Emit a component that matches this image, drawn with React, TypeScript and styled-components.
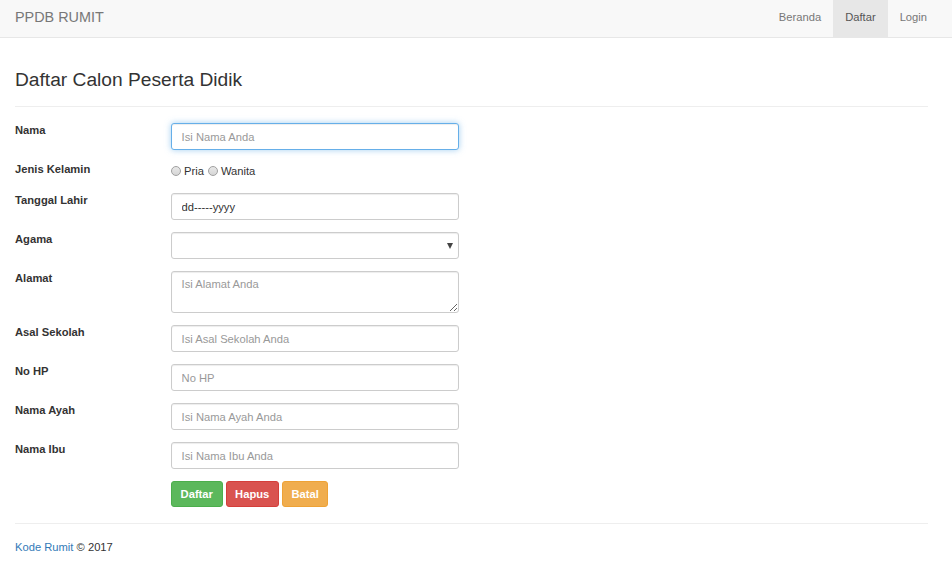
import React from "react";
import styled, { createGlobalStyle, css } from "styled-components";

const Global = createGlobalStyle`
  html, body { margin: 0; padding: 0; background: #fff; }
  body {
    font-family: "Liberation Sans", Arial, Helvetica, sans-serif;
    font-size: 11.2px;
    line-height: 16px;
    color: #333;
  }
  * { box-sizing: border-box; }
`;

const Navbar = styled.nav`
  height: 38px;
  background: #f8f8f8;
  border-bottom: 1px solid #e7e7e7;
  display: flex;
  align-items: stretch;
  justify-content: space-between;
  padding: 0 13px 0 15px;
`;

const Brand = styled.a`
  font-size: 14.4px;
  line-height: 35px;
  color: #777;
  text-decoration: none;
`;

const NavList = styled.ul`
  list-style: none;
  margin: 0;
  padding: 0;
  display: flex;
  height: 37px;
`;

const NavItem = styled.li<{ $active?: boolean }>`
  padding: 0 12px;
  line-height: 35px;
  color: #777;
  ${(p) =>
    p.$active &&
    css`
      background: #e7e7e7;
      color: #555;
    `}
`;

const Container = styled.main`
  padding: 0 24px 0 15px;
`;

const PageHeader = styled.div`
  margin-top: 31px;
  padding-bottom: 16px;
  border-bottom: 1px solid #eee;
`;

const Title = styled.h3`
  margin: 0;
  font-size: 19.2px;
  line-height: 21px;
  font-weight: 500;
  color: #333;
`;

const Form = styled.form`
  margin-top: 16px;
  display: grid;
  grid-template-columns: 156px 288px;
  row-gap: 12px;
  align-items: start;
`;

const Label = styled.label`
  font-weight: bold;
  line-height: 14px;
`;

const fieldBase = css`
  display: block;
  width: 288px;
  height: 27px;
  padding: 0 9.6px;
  font-family: "Liberation Sans", Arial, Helvetica, sans-serif;
  font-size: 11.2px;
  color: #555;
  background: #fff;
  border: 1px solid #ccc;
  border-radius: 3px;
  box-shadow: inset 0 1px 1px rgba(0, 0, 0, 0.075);
  outline: none;
  &::placeholder {
    color: #999;
  }
`;

const Input = styled.input<{ $focus?: boolean; $filled?: boolean }>`
  ${fieldBase}
  ${(p) =>
    p.$filled &&
    css`
      color: #333;
    `}
  ${(p) =>
    p.$focus &&
    css`
      border-color: #66afe9;
      box-shadow: inset 0 1px 1px rgba(0, 0, 0, 0.075),
        0 0 6px rgba(102, 175, 233, 0.6);
    `}
`;

const TextArea = styled.textarea`
  ${fieldBase}
  height: 42px;
  padding-top: 4px;
  line-height: 16px;
  resize: vertical;
`;

const SelectWrap = styled.div`
  position: relative;
  width: 288px;
  &::after {
    content: "";
    position: absolute;
    right: 6px;
    top: 11px;
    border-left: 3.5px solid transparent;
    border-right: 3.5px solid transparent;
    border-top: 6px solid #444;
    pointer-events: none;
  }
`;

const Select = styled.select`
  ${fieldBase}
  appearance: none;
  -webkit-appearance: none;
`;

const RadioGroup = styled.div`
  display: flex;
  align-items: center;
  height: 19px;
  padding-bottom: 1px;
`;

const RadioOption = styled.label`
  display: inline-flex;
  align-items: center;
  margin-right: 4px;
  color: #333;
`;

const RadioDot = styled.span`
  display: inline-block;
  width: 10px;
  height: 10px;
  border-radius: 50%;
  border: 1px solid #a0a0a0;
  background: linear-gradient(#e8e8e8, #d6d6d6);
  margin-right: 3px;
`;

const Buttons = styled.div`
  display: flex;
  gap: 3px;
`;

const variants = {
  success: { bg: "#5cb85c", border: "#4cae4c" },
  danger: { bg: "#d9534f", border: "#d43f3a" },
  warning: { bg: "#f0ad4e", border: "#eea236" },
};

const Button = styled.button<{ $variant: keyof typeof variants }>`
  height: 26px;
  padding: 0 8.6px;
  font-family: "Liberation Sans", Arial, Helvetica, sans-serif;
  font-size: 11.2px;
  font-weight: bold;
  color: #fff;
  border-radius: 3px;
  border: 1px solid ${(p) => variants[p.$variant].border};
  background: ${(p) => variants[p.$variant].bg};
  cursor: pointer;
`;

const Footer = styled.footer`
  margin-top: 16px;
  border-top: 1px solid #eee;
  padding-top: 15px;
`;

const FooterLink = styled.a`
  color: #337ab7;
  text-decoration: none;
`;

const Spacer = styled.div``;

export default function App() {
  return (
    <>
      <Global />
      <Navbar>
        <Brand href="#">PPDB RUMIT</Brand>
        <NavList>
          <NavItem>Beranda</NavItem>
          <NavItem $active>Daftar</NavItem>
          <NavItem>Login</NavItem>
        </NavList>
      </Navbar>
      <Container>
        <PageHeader>
          <Title>Daftar Calon Peserta Didik</Title>
        </PageHeader>
        <Form onSubmit={(e) => e.preventDefault()}>
          <Label>Nama</Label>
          <Input $focus placeholder="Isi Nama Anda" />

          <Label>Jenis Kelamin</Label>
          <RadioGroup>
            <RadioOption>
              <RadioDot />
              Pria
            </RadioOption>
            <RadioOption>
              <RadioDot />
              Wanita
            </RadioOption>
          </RadioGroup>

          <Label>Tanggal Lahir</Label>
          <Input $filled readOnly value="dd-----yyyy" />

          <Label>Agama</Label>
          <SelectWrap>
            <Select defaultValue="">
              <option value=""></option>
            </Select>
          </SelectWrap>

          <Label>Alamat</Label>
          <TextArea placeholder="Isi Alamat Anda" />

          <Label>Asal Sekolah</Label>
          <Input placeholder="Isi Asal Sekolah Anda" />

          <Label>No HP</Label>
          <Input placeholder="No HP" />

          <Label>Nama Ayah</Label>
          <Input placeholder="Isi Nama Ayah Anda" />

          <Label>Nama Ibu</Label>
          <Input placeholder="Isi Nama Ibu Anda" />

          <Spacer />
          <Buttons>
            <Button $variant="success">Daftar</Button>
            <Button $variant="danger">Hapus</Button>
            <Button $variant="warning">Batal</Button>
          </Buttons>
        </Form>
        <Footer>
          <FooterLink href="#">Kode Rumit</FooterLink> © 2017
        </Footer>
      </Container>
    </>
  );
}
